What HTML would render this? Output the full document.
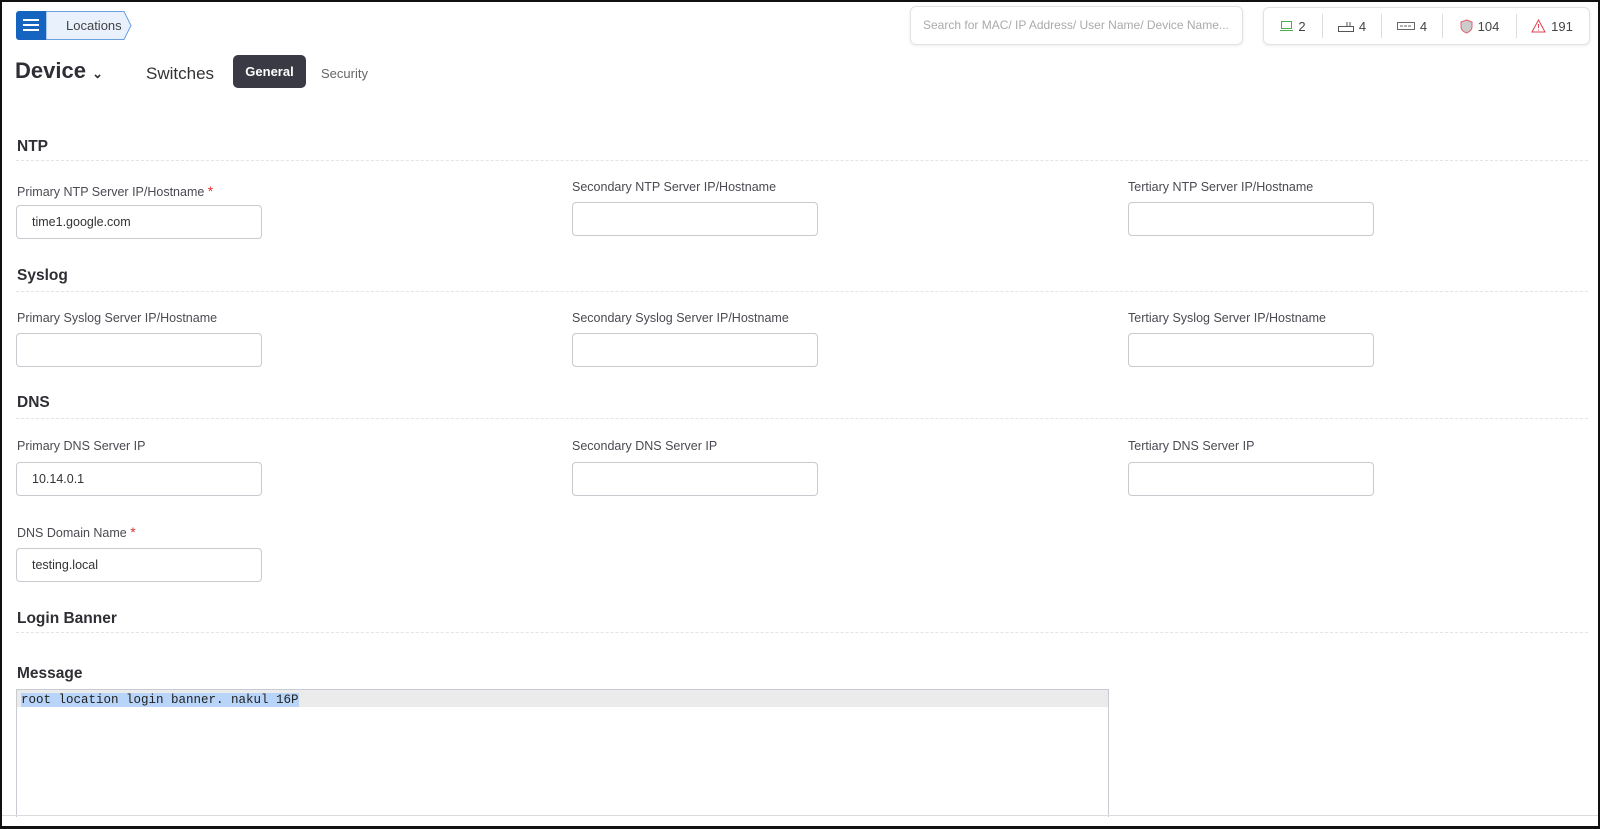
<!DOCTYPE html>
<html><head><meta charset="utf-8"><style>
*{box-sizing:border-box;margin:0;padding:0}
body{width:1600px;height:829px;overflow:hidden;background:#fff;font-family:"Liberation Sans",sans-serif;color:#3a3a40;position:relative}
.frame{position:absolute;left:0;top:0;width:1600px;height:829px;border:2px solid #111;border-bottom-width:3px;pointer-events:none;z-index:10}
.a{position:absolute}
.lbl{position:absolute;font-size:12.5px;color:#4a4a52;white-space:nowrap}
.inp{position:absolute;width:246px;height:34px;border:1px solid #c9c9cf;border-radius:4px;font-size:12.5px;color:#333;padding:0 15px;line-height:32px}
.h{position:absolute;left:17px;font-size:15.5px;font-weight:bold;color:#2e2e34}
.line{position:absolute;left:16px;right:12px;border-top:1px dashed #e4e4e8}
.star{color:#e03030;font-size:14px}
.stat{display:flex;align-items:center;justify-content:center;gap:5px;font-size:13px;color:#444;border-right:1px solid #ddd;height:24px;flex:none}
</style></head><body>
<div class="frame"></div>
<div class="a" style="left:16px;top:11px;width:30px;height:29px;background:#1565c0;border-radius:3px 0 0 3px"></div>
<div class="a" style="left:23px;top:19px;width:16px;height:2px;background:#fff;box-shadow:0 5px 0 #fff,0 10px 0 #fff"></div>
<svg class="a" style="left:46px;top:11px" width="90" height="29"><path d="M0 .5H78L85 14.5L78 28.5H0Z" fill="#e8f1fc" stroke="#6a9fe0"/><text x="20" y="19" font-size="13" fill="#444" font-family="Liberation Sans">Locations</text></svg>
<div class="a" style="left:15px;top:58px;font-size:22px;font-weight:bold;color:#2e2e36">Device <span style="font-size:13px">&#x2304;</span></div>
<div class="a" style="left:146px;top:64px;font-size:17px;color:#333">Switches</div>
<div class="a" style="left:233px;top:55px;width:73px;height:33px;background:#3a3a44;border-radius:5px;color:#fff;font-size:13px;font-weight:bold;text-align:center;line-height:33px">General</div>
<div class="a" style="left:321px;top:66px;font-size:13px;color:#666">Security</div>
<div class="a" style="left:910px;top:6px;width:333px;height:39px;border:1px solid #e2e2e6;border-radius:6px;box-shadow:0 1px 3px rgba(0,0,0,.08);font-size:12px;color:#aaa;padding-left:12px;line-height:37px;white-space:nowrap;overflow:hidden">Search for MAC/ IP Address/ User Name/ Device Name...</div>
<div class="a" style="left:1263px;top:7px;width:327px;height:38px;border:1px solid #e2e2e6;border-radius:6px;box-shadow:0 1px 3px rgba(0,0,0,.08);display:flex;align-items:center">
<div class="stat" style="width:59px"><svg width="13" height="10"><rect x="1.5" y=".5" width="10" height="7" fill="none" stroke="#4caf50"/><path d="M0 9.5H13" stroke="#4caf50"/></svg>2</div>
<div class="stat" style="width:59px"><svg width="16" height="11"><rect x=".5" y="5.5" width="15" height="5" fill="none" stroke="#555"/><path d="M9 5V1M12 5V1" stroke="#555"/></svg>4</div>
<div class="stat" style="width:61px"><svg width="18" height="8"><rect x=".5" y=".5" width="17" height="7" fill="none" stroke="#666"/><path d="M3 4H15" stroke="#666" stroke-dasharray="3 1"/></svg>4</div>
<div class="stat" style="width:74px"><svg width="13" height="15"><path d="M6.5 1L12 3V8C12 11 9 13 6.5 14C4 13 1 11 1 8V3Z" fill="#ccc" stroke="#e06070"/></svg>104</div>
<div class="stat" style="width:70px;border:none"><svg width="15" height="14"><path d="M7.5 1L14 13H1Z" fill="none" stroke="#e04050"/><path d="M7.5 5V9M7.5 10.5V11.5" stroke="#e04050"/></svg>191</div>
</div>
<div class="h" style="top:138px">NTP</div><div class="line" style="top:160px"></div>
<div class="lbl" style="left:17px;top:183px">Primary NTP Server IP/Hostname <span class="star">*</span></div>
<div class="inp" style="left:16px;top:205px">time1.google.com</div>
<div class="lbl" style="left:572px;top:180px">Secondary NTP Server IP/Hostname</div>
<div class="inp" style="left:572px;top:202px"></div>
<div class="lbl" style="left:1128px;top:180px">Tertiary NTP Server IP/Hostname</div>
<div class="inp" style="left:1128px;top:202px"></div>
<div class="h" style="top:267px">Syslog</div><div class="line" style="top:291px"></div>
<div class="lbl" style="left:17px;top:311px">Primary Syslog Server IP/Hostname</div>
<div class="inp" style="left:16px;top:333px"></div>
<div class="lbl" style="left:572px;top:311px">Secondary Syslog Server IP/Hostname</div>
<div class="inp" style="left:572px;top:333px"></div>
<div class="lbl" style="left:1128px;top:311px">Tertiary Syslog Server IP/Hostname</div>
<div class="inp" style="left:1128px;top:333px"></div>
<div class="h" style="top:394px">DNS</div><div class="line" style="top:418px"></div>
<div class="lbl" style="left:17px;top:439px">Primary DNS Server IP</div>
<div class="inp" style="left:16px;top:462px">10.14.0.1</div>
<div class="lbl" style="left:572px;top:439px">Secondary DNS Server IP</div>
<div class="inp" style="left:572px;top:462px"></div>
<div class="lbl" style="left:1128px;top:439px">Tertiary DNS Server IP</div>
<div class="inp" style="left:1128px;top:462px"></div>
<div class="lbl" style="left:17px;top:524px">DNS Domain Name <span class="star">*</span></div>
<div class="inp" style="left:16px;top:548px">testing.local</div>
<div class="h" style="top:610px">Login Banner</div><div class="line" style="top:632px"></div>
<div class="h" style="top:665px">Message</div>
<div class="a" style="left:16px;top:689px;width:1093px;height:128px;border:1px solid #c8ccd2;border-bottom:none">
<div style="height:17px;background:#ebebeb;padding-left:4px"><span style="background:#b8d4f8;font-family:'Liberation Mono',monospace;font-size:12.5px;line-height:17px;color:#222">root location login banner. nakul 16P</span></div>
</div>
<div class="a" style="left:2px;right:2px;top:815px;border-top:1px solid #dcdcdc"></div>
</body></html>
